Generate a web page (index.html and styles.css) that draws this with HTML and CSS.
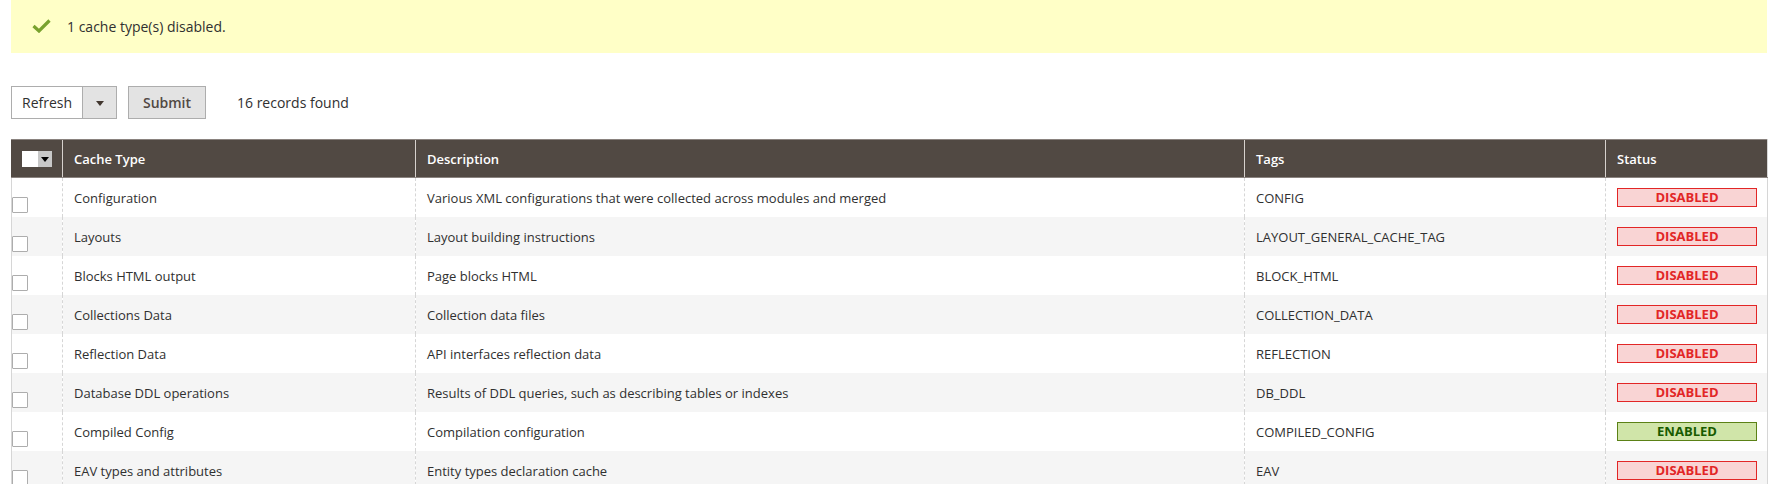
FILE: index.html
```html
<!DOCTYPE html>
<html>
<head>
<meta charset="utf-8">
<link rel="stylesheet" href="styles.css">
</head>
<body>
<div class="page">
  <div class="message">
    <svg class="msg-icon" width="19" height="14" viewBox="0 0 19 14"><path d="M1.5 7 L7 12 L17.5 1.5" fill="none" stroke="#79a22e" stroke-width="3.2"/></svg>
    <span class="msg-text">1 cache type(s) disabled.</span>
  </div>

  <div class="toolbar">
    <div class="select">
      <span class="select-label">Refresh</span>
      <span class="select-arrow"><span class="tri"></span></span>
    </div>
    <button class="btn">Submit</button>
    <span class="records">16 records found</span>
  </div>

  <table class="grid">
    <colgroup>
      <col class="c1"><col class="c2"><col class="c3"><col class="c4"><col class="c5">
    </colgroup>
    <thead>
      <tr>
        <th class="mass"><span class="mass-box"><span class="mass-check"></span><span class="mass-drop"><span class="tri-b"></span></span></span></th>
        <th>Cache Type</th>
        <th>Description</th>
        <th>Tags</th>
        <th>Status</th>
      </tr>
    </thead>
    <tbody>
      <tr><td class="cb"><span class="box"></span></td><td>Configuration</td><td>Various XML configurations that were collected across modules and merged</td><td>CONFIG</td><td><span class="badge off">DISABLED</span></td></tr>
      <tr><td class="cb"><span class="box"></span></td><td>Layouts</td><td>Layout building instructions</td><td>LAYOUT_GENERAL_CACHE_TAG</td><td><span class="badge off">DISABLED</span></td></tr>
      <tr><td class="cb"><span class="box"></span></td><td>Blocks HTML output</td><td>Page blocks HTML</td><td>BLOCK_HTML</td><td><span class="badge off">DISABLED</span></td></tr>
      <tr><td class="cb"><span class="box"></span></td><td>Collections Data</td><td>Collection data files</td><td>COLLECTION_DATA</td><td><span class="badge off">DISABLED</span></td></tr>
      <tr><td class="cb"><span class="box"></span></td><td>Reflection Data</td><td>API interfaces reflection data</td><td>REFLECTION</td><td><span class="badge off">DISABLED</span></td></tr>
      <tr><td class="cb"><span class="box"></span></td><td>Database DDL operations</td><td>Results of DDL queries, such as describing tables or indexes</td><td>DB_DDL</td><td><span class="badge off">DISABLED</span></td></tr>
      <tr><td class="cb"><span class="box"></span></td><td>Compiled Config</td><td>Compilation configuration</td><td>COMPILED_CONFIG</td><td><span class="badge on">ENABLED</span></td></tr>
      <tr><td class="cb"><span class="box"></span></td><td>EAV types and attributes</td><td>Entity types declaration cache</td><td>EAV</td><td><span class="badge off">DISABLED</span></td></tr>
    </tbody>
  </table>
</div>
</body>
</html>
```

FILE: styles.css
```css
html, body {
  margin: 0;
  padding: 0;
  background: #fff;
}
body {
  font-family: "Open Sans", "Liberation Sans", sans-serif;
  color: #303030;
  height: 100vh;
  overflow: hidden;
}
.page {
  padding: 0 8px 0 11px;
}
.message {
  height: 53px;
  background: #ffffc7;
  display: flex;
  align-items: center;
  padding-left: 21px;
  font-size: 14px;
}
.msg-icon {
  margin-right: 16px;
  margin-top: -1px;
}
.msg-text {
  color: #303030;
}
.toolbar {
  display: flex;
  align-items: center;
  margin-top: 33px;
  height: 33px;
  margin-bottom: 20px;
}
.select {
  display: flex;
  height: 33px;
  box-sizing: border-box;
  border: 1px solid #adadad;
  width: 106px;
  background: #fff;
}
.select-label {
  flex: 1;
  display: flex;
  align-items: center;
  padding-left: 10px;
  font-size: 14px;
  color: #303030;
}
.select-arrow {
  width: 33px;
  background: #e3e3e3;
  border-left: 1px solid #adadad;
  display: flex;
  align-items: center;
  justify-content: center;
}
.tri {
  width: 0;
  height: 0;
  border-left: 4px solid transparent;
  border-right: 4px solid transparent;
  border-top: 5px solid #41362f;
  margin-top: 1px;
}
.btn {
  margin-left: 11px;
  height: 33px;
  width: 78px;
  box-sizing: border-box;
  background: #e3e3e3;
  border: 1px solid #adadad;
  font-family: "Open Sans", "Liberation Sans", sans-serif;
  font-size: 14px;
  font-weight: 600;
  color: #514943;
  padding: 0;
}
.records {
  margin-left: 31px;
  font-size: 14px;
  color: #303030;
}
.grid {
  width: 1756px;
  table-layout: fixed;
  border-collapse: collapse;
  font-size: 13px;
}
.c1 { width: 51px; }
.c2 { width: 353px; }
.c3 { width: 829px; }
.c4 { width: 361px; }
.c5 { width: 162px; }
.grid th {
  background: #514943;
  color: #fff;
  font-weight: 600;
  text-align: left;
  height: 38px;
  padding: 0 11px;
  border-top: 1px solid #8a837f;
  border-bottom: 1px solid #8a837f;
  border-left: 1px solid #d6d1cd;
  box-sizing: border-box;
  vertical-align: middle;
}
.grid th:first-child {
  border-left: 1px solid #514943;
}
.grid th:last-child {
  border-right: 1px solid #d6d6d6;
}
.grid th.mass {
  padding: 0 0 0 10px;
}
.mass-box {
  display: flex;
  width: 30px;
  height: 16px;
  margin-top: 1px;
}
.mass-check {
  width: 16px;
  background: #fff;
}
.mass-drop {
  width: 14px;
  background: #c8c8c8;
  display: flex;
  align-items: center;
  justify-content: center;
}
.tri-b {
  width: 0;
  height: 0;
  border-left: 4px solid transparent;
  border-right: 4px solid transparent;
  border-top: 5px solid #000;
  margin-top: 1px;
}
.grid td {
  height: 39px;
  padding: 0 11px;
  border-left: 1px dashed #d6d6d6;
  vertical-align: middle;
  color: #303030;
  white-space: nowrap;
  overflow: hidden;
}
.grid td:first-child {
  border-left: 1px solid #d6d6d6;
}
.grid td:last-child {
  border-right: 1px solid #d6d6d6;
}
.grid tbody tr:nth-child(even) td {
  background: #f5f5f5;
}
.grid td.cb {
  padding: 0;
  vertical-align: bottom;
}
.box {
  display: block;
  width: 16px;
  height: 16px;
  box-sizing: border-box;
  border: 1px solid #adadad;
  border-radius: 1px;
  background: #fff;
  margin: 0 0 4px 0;
}
.badge {
  display: block;
  height: 19px;
  box-sizing: border-box;
  line-height: 17px;
  text-align: center;
  font-weight: 700;
  font-size: 13px;
  margin-right: -1px;
}
.badge.off {
  background: #f9d4d4;
  border: 1px solid #e22626;
  color: #e22626;
}
.badge.on {
  background: #d0e5a9;
  border: 1px solid #5b8116;
  color: #185b00;
}
```
